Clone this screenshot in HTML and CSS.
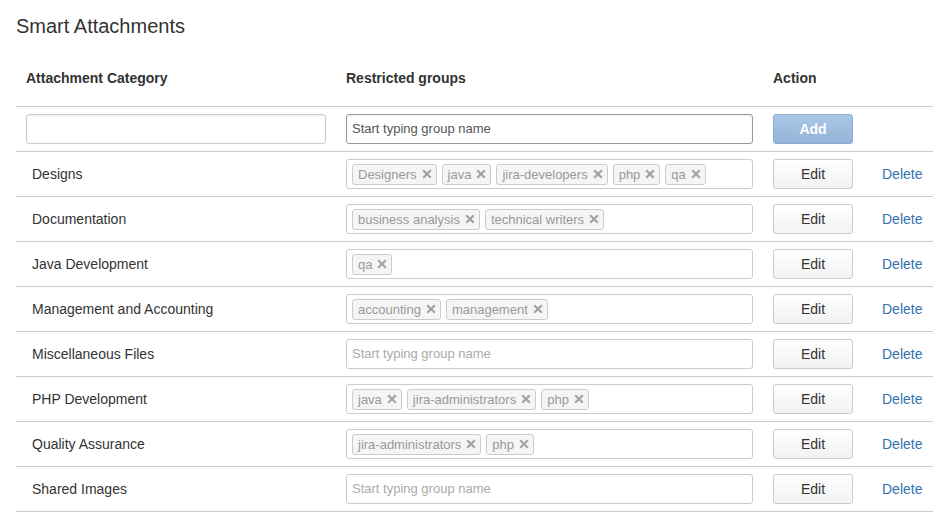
FILE: index.html
```html
<!DOCTYPE html>
<html>
<head>
<meta charset="utf-8">
<title>Smart Attachments</title>
<link rel="stylesheet" href="styles.css">
</head>
<body>
<div class="page">
  <h1 class="title">Smart Attachments</h1>
  <div class="table">
    <div class="row head">
      <div class="cell">Attachment Category</div>
      <div class="cell">Restricted groups</div>
      <div class="cell">Action</div>
      <div class="cell"></div>
    </div>

    <div class="row">
      <div class="cell"><div class="text-input"></div></div>
      <div class="cell"><div class="group-input active"><span class="ph dark">Start typing group name</span></div></div>
      <div class="cell"><button class="btn primary">Add</button></div>
      <div class="cell"></div>
    </div>

    <div class="row">
      <div class="cell name">Designs</div>
      <div class="cell"><div class="group-input">
        <span class="tag">Designers<svg class="x" viewBox="0 0 10 10"><path d="M1.2 1.2L8.8 8.8M8.8 1.2L1.2 8.8"/></svg></span>
        <span class="tag">java<svg class="x" viewBox="0 0 10 10"><path d="M1.2 1.2L8.8 8.8M8.8 1.2L1.2 8.8"/></svg></span>
        <span class="tag">jira-developers<svg class="x" viewBox="0 0 10 10"><path d="M1.2 1.2L8.8 8.8M8.8 1.2L1.2 8.8"/></svg></span>
        <span class="tag">php<svg class="x" viewBox="0 0 10 10"><path d="M1.2 1.2L8.8 8.8M8.8 1.2L1.2 8.8"/></svg></span>
        <span class="tag">qa<svg class="x" viewBox="0 0 10 10"><path d="M1.2 1.2L8.8 8.8M8.8 1.2L1.2 8.8"/></svg></span>
      </div></div>
      <div class="cell"><button class="btn">Edit</button></div>
      <div class="cell"><a class="link" href="#">Delete</a></div>
    </div>

    <div class="row">
      <div class="cell name">Documentation</div>
      <div class="cell"><div class="group-input">
        <span class="tag">business analysis<svg class="x" viewBox="0 0 10 10"><path d="M1.2 1.2L8.8 8.8M8.8 1.2L1.2 8.8"/></svg></span>
        <span class="tag">technical writers<svg class="x" viewBox="0 0 10 10"><path d="M1.2 1.2L8.8 8.8M8.8 1.2L1.2 8.8"/></svg></span>
      </div></div>
      <div class="cell"><button class="btn">Edit</button></div>
      <div class="cell"><a class="link" href="#">Delete</a></div>
    </div>

    <div class="row">
      <div class="cell name">Java Development</div>
      <div class="cell"><div class="group-input">
        <span class="tag">qa<svg class="x" viewBox="0 0 10 10"><path d="M1.2 1.2L8.8 8.8M8.8 1.2L1.2 8.8"/></svg></span>
      </div></div>
      <div class="cell"><button class="btn">Edit</button></div>
      <div class="cell"><a class="link" href="#">Delete</a></div>
    </div>

    <div class="row">
      <div class="cell name">Management and Accounting</div>
      <div class="cell"><div class="group-input">
        <span class="tag">accounting<svg class="x" viewBox="0 0 10 10"><path d="M1.2 1.2L8.8 8.8M8.8 1.2L1.2 8.8"/></svg></span>
        <span class="tag">management<svg class="x" viewBox="0 0 10 10"><path d="M1.2 1.2L8.8 8.8M8.8 1.2L1.2 8.8"/></svg></span>
      </div></div>
      <div class="cell"><button class="btn">Edit</button></div>
      <div class="cell"><a class="link" href="#">Delete</a></div>
    </div>

    <div class="row">
      <div class="cell name">Miscellaneous Files</div>
      <div class="cell"><div class="group-input"><span class="ph">Start typing group name</span></div></div>
      <div class="cell"><button class="btn">Edit</button></div>
      <div class="cell"><a class="link" href="#">Delete</a></div>
    </div>

    <div class="row">
      <div class="cell name">PHP Development</div>
      <div class="cell"><div class="group-input">
        <span class="tag">java<svg class="x" viewBox="0 0 10 10"><path d="M1.2 1.2L8.8 8.8M8.8 1.2L1.2 8.8"/></svg></span>
        <span class="tag">jira-administrators<svg class="x" viewBox="0 0 10 10"><path d="M1.2 1.2L8.8 8.8M8.8 1.2L1.2 8.8"/></svg></span>
        <span class="tag">php<svg class="x" viewBox="0 0 10 10"><path d="M1.2 1.2L8.8 8.8M8.8 1.2L1.2 8.8"/></svg></span>
      </div></div>
      <div class="cell"><button class="btn">Edit</button></div>
      <div class="cell"><a class="link" href="#">Delete</a></div>
    </div>

    <div class="row">
      <div class="cell name">Quality Assurance</div>
      <div class="cell"><div class="group-input">
        <span class="tag">jira-administrators<svg class="x" viewBox="0 0 10 10"><path d="M1.2 1.2L8.8 8.8M8.8 1.2L1.2 8.8"/></svg></span>
        <span class="tag">php<svg class="x" viewBox="0 0 10 10"><path d="M1.2 1.2L8.8 8.8M8.8 1.2L1.2 8.8"/></svg></span>
      </div></div>
      <div class="cell"><button class="btn">Edit</button></div>
      <div class="cell"><a class="link" href="#">Delete</a></div>
    </div>

    <div class="row">
      <div class="cell name">Shared Images</div>
      <div class="cell"><div class="group-input"><span class="ph">Start typing group name</span></div></div>
      <div class="cell"><button class="btn">Edit</button></div>
      <div class="cell"><a class="link" href="#">Delete</a></div>
    </div>
  </div>
</div>
</body>
</html>
```

FILE: styles.css
```css
* { box-sizing: border-box; }

html, body {
  margin: 0;
  padding: 0;
  background: #fff;
}

body {
  font-family: "Liberation Sans", Arial, sans-serif;
  font-size: 14px;
  line-height: 20px;
  color: #333;
}

.page {
  padding: 14px 16px 0 16px;
}

.title {
  margin: 0;
  font-size: 20px;
  line-height: 24px;
  font-weight: normal;
  color: #333;
}

.table {
  margin-top: 30px;
  width: 917px;
}

.row {
  display: grid;
  grid-template-columns: 320px 427px 109px 61px;
  align-items: center;
  border-bottom: 1px solid #ccc;
  padding: 7px 0;
}

.row.head {
  padding: 0 0 18px 0;
  font-weight: bold;
}

.cell {
  padding: 0 10px;
  min-width: 0;
}

.cell.name {
  padding-left: 16px;
}

.text-input {
  width: 300px;
  height: 30px;
  border: 1px solid #ccc;
  border-radius: 3px;
  box-shadow: inset 0 1px 2px rgba(0,0,0,0.08);
  background: #fff;
}

.group-input {
  width: 407px;
  height: 30px;
  border: 1px solid #ccc;
  border-radius: 3px;
  background: #fff;
  display: flex;
  align-items: center;
  gap: 5px;
  padding: 0 5px;
  overflow: hidden;
}

.group-input.active {
  border-color: #999;
  box-shadow: inset 0 1px 2px rgba(0,0,0,0.08);
}

.ph {
  font-size: 13px;
  color: #aaa;
}

.ph.dark {
  color: #555;
}

.tag {
  display: inline-flex;
  align-items: center;
  height: 21px;
  padding: 0 4px 0 5px;
  gap: 5px;
  border: 1px solid #ccc;
  border-radius: 3px;
  background: #f5f5f5;
  color: #999;
  font-size: 13px;
  line-height: 19px;
  white-space: nowrap;
}

.x {
  width: 10px;
  height: 10px;
  stroke: #a3a3a3;
  stroke-width: 2.2;
  fill: none;
}

.btn {
  display: block;
  width: 80px;
  height: 30px;
  border: 1px solid #ccc;
  border-radius: 3px;
  background: linear-gradient(#ffffff, #f2f2f2);
  color: #333;
  font-family: "Liberation Sans", Arial, sans-serif;
  font-size: 14px;
  padding: 0;
}

.btn.primary {
  background: linear-gradient(#a9c8e8, #93b3d6);
  border-color: #8aaad0;
  color: #fff;
  font-weight: bold;
}

.link {
  color: #3572b0;
  text-decoration: none;
}
```
